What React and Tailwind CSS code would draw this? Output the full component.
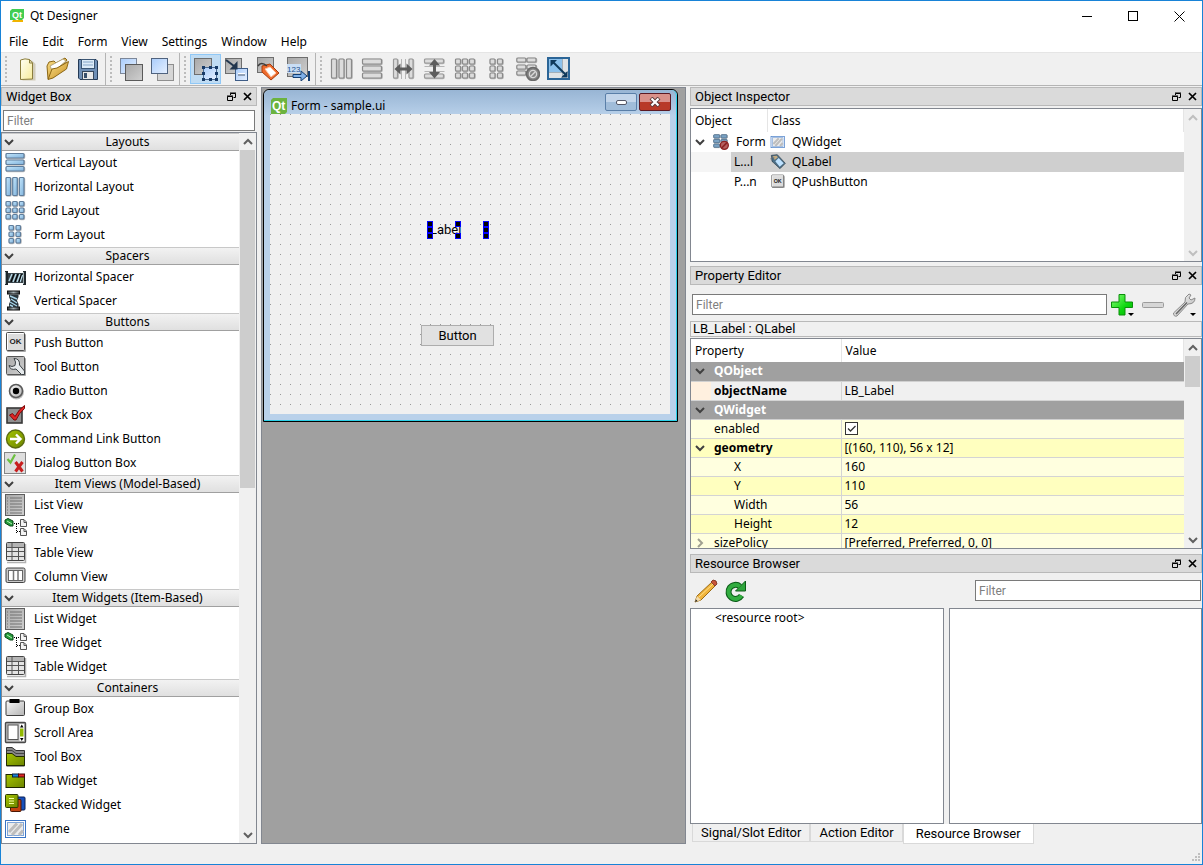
import { useState } from "react";
import clsx from "clsx";

/* ---------- shared gradients, referenced by every icon ---------- */

const GradientDefs = () => (
  <svg width="0" height="0" className="absolute" aria-hidden="true">
    <defs>
      <linearGradient id="blue" x1="0" y1="0" x2="1" y2="1">
        <stop offset="0" stopColor="#c4e6fb" />
        <stop offset="1" stopColor="#7fb2dc" />
      </linearGradient>
      <linearGradient id="pale" x1="0" y1="0" x2="1" y2="1">
        <stop offset="0" stopColor="#a9ccfa" />
        <stop offset="1" stopColor="#e6f0ff" />
      </linearGradient>
      <linearGradient id="grey" x1="0" y1="0" x2="1" y2="1">
        <stop offset="0" stopColor="#a8a8a8" />
        <stop offset="1" stopColor="#d0d0d0" />
      </linearGradient>
      <linearGradient id="light" x1="0" y1="0" x2="1" y2="1">
        <stop offset="0" stopColor="#f8f8f8" />
        <stop offset="1" stopColor="#b4b4b4" />
      </linearGradient>
      <linearGradient id="paper" x1="0" y1="0" x2="1" y2="1">
        <stop offset="0" stopColor="#fffff4" />
        <stop offset="1" stopColor="#f7eb9b" />
      </linearGradient>
      <linearGradient id="folder" x1="0" y1="0" x2="1" y2="1">
        <stop offset="0" stopColor="#fbe08a" />
        <stop offset="1" stopColor="#c68d1e" />
      </linearGradient>
      <linearGradient id="olive" x1="0" y1="0" x2="1" y2="1">
        <stop offset="0" stopColor="#a5c400" />
        <stop offset="1" stopColor="#6c8400" />
      </linearGradient>
      <linearGradient id="green" x1="0" y1="0" x2="1" y2="1">
        <stop offset="0" stopColor="#8dff7c" />
        <stop offset="0.6" stopColor="#10d810" />
        <stop offset="1" stopColor="#05b005" />
      </linearGradient>
      <linearGradient id="metal" x1="0" y1="0" x2="1" y2="0">
        <stop offset="0" stopColor="#2a3034" />
        <stop offset="0.5" stopColor="#a8b4b8" />
        <stop offset="1" stopColor="#2a3034" />
      </linearGradient>
    </defs>
  </svg>
);

const Svg = ({ size = 24, children }) => (
  <svg width={size} height={size} viewBox="0 0 24 24" className="shrink-0" fill="none" aria-hidden="true">
    {children}
  </svg>
);

const Cells = ({ xs, ys, w, h, fill, stroke }) =>
  xs.map((x) =>
    ys.map((y) => (
      <g key={`${x}-${y}`}>
        <rect x={x + 0.5} y={y + 0.5} width={w} height={h} rx="1" stroke="#000" strokeOpacity="0.25" strokeWidth="1.5" />
        <rect x={x} y={y} width={w} height={h} rx="1" fill={fill} stroke={stroke} strokeWidth="1.2" />
      </g>
    ))
  );

const NoSign = ({ color, fill }) => (
  <g>
    <circle cx="17" cy="17" r="6.5" fill={fill} stroke={color} strokeWidth="1.5" />
    <circle cx="17" cy="17" r="3.6" stroke="#d8d8d8" strokeWidth="1.3" />
    <path d="M14.5 19.5L19.5 14.5" stroke="#d8d8d8" strokeWidth="1.4" />
  </g>
);

/* ---------- toolbar icons ---------- */

const greyCells = { fill: "#dcdcdc", stroke: "#8a8a8a" };

const toolIcons = {
  newFile: (
    <g>
      <path d="M7.5 2.5H16L19.5 6V22.5H6.5V3.5Z" fill="#8a7a40" opacity="0.3" transform="translate(1 1)" />
      <path d="M5.5 3Q10 1 14.500 2.500L17.500 6V22L5.500 22.500Z" fill="url(#paper)" stroke="#8b7d3c" />
      <path d="M14.500 2.500V6H17.500" stroke="#8b7d3c" />
    </g>
  ),
  open: (
    <g>
      <path d="M1 9L3 5L8 4L10 6L19 1L21 3L8 20L2 22Z" fill="url(#folder)" stroke="#8c6716" />
      <path d="M4 9L17 2L20 4L7 15Z" fill="#fff" stroke="#b5a77c" />
      <path d="M2 22.5L6 12L11 11L22.5 4.5L20.5 12L7 21Z" fill="url(#folder)" stroke="#8c6716" />
    </g>
  ),
  save: (
    <g>
      <path d="M1.5 2.5H19L20.5 4V22.5H3L1.5 21Z" fill="#6f8fb6" stroke="#243a56" />
      <rect x="4.5" y="2.5" width="13" height="9" fill="#dcebf8" stroke="#3a5573" />
      <path d="M6 5H16M6 8H16" stroke="#86a6c8" />
      <rect x="5.5" y="14.5" width="11" height="8" fill="#e8e8e8" stroke="#37485c" />
      <rect x="7" y="16" width="3" height="5" fill="#39506c" />
    </g>
  ),
  sendBack: (
    <g>
      <rect x="0.5" y="1.5" width="16" height="15" fill="url(#pale)" stroke="#7c8799" />
      <rect x="5.5" y="7.5" width="17" height="16" fill="url(#grey)" stroke="#5a5a5a" />
    </g>
  ),
  raise: (
    <g>
      <rect x="6.5" y="7.5" width="16" height="16" fill="#d6d6d6" stroke="#8f8f8f" />
      <rect x="0.5" y="1.5" width="16" height="15" fill="url(#pale)" stroke="#50637f" />
    </g>
  ),
  widgets: (
    <g>
      <rect x="0.5" y="1.5" width="17" height="16" fill="url(#grey)" stroke="#6e6e6e" />
      <rect x="9.5" y="10.5" width="13" height="12" fill="url(#pale)" stroke="#4a688e" />
      {[8, 15, 21].map((x) =>
        [9, 15, 21].map((y) => x === 15 && y === 15 ? null : (
          <rect key={`${x}-${y}`} x={x} y={y} width="3" height="3" fill="#173a67" />
        ))
      )}
    </g>
  ),
  signals: (
    <g>
      <rect x="0.5" y="1.5" width="16" height="15" fill="url(#grey)" stroke="#6e6e6e" />
      <rect x="10.5" y="11.5" width="12" height="12" fill="url(#pale)" stroke="#3d5c86" />
      <path d="M13 17.5H20" stroke="#fff" strokeWidth="3" />
      <path d="M13 18H20" stroke="#23436f" />
      <path d="M1 3L9 9" stroke="#22364e" strokeWidth="2" />
      <path d="M12.500 12.500V4L4.500 12.500Z" fill="#22364e" />
    </g>
  ),
  buddies: (
    <g>
      <rect x="1.5" y="0.5" width="16" height="15" fill="url(#grey)" stroke="#6e6e6e" />
      <path d="M6 9L14 7L23 16L15 23L6 15Z" fill="#ee6b2d" stroke="#a73c0c" />
      <path d="M9 12L14 10L20 16L15 20Z" fill="#fff" stroke="#ffc7a6" />
      <path d="M2 9Q5 4 11 9" stroke="#3c3c3c" strokeWidth="1.5" />
    </g>
  ),
  tabOrder: (
    <g>
      <rect x="0.5" y="0.5" width="20" height="19" fill="url(#grey)" stroke="#6e6e6e" />
      <rect x="0" y="7" width="14" height="9" fill="#c9def5" />
      <text x="0" y="15" fontSize="8" fontFamily="Liberation Sans, sans-serif" fill="#1d4f8c">123</text>
      <path d="M6 17.500H14V14L20 19L14 24V20.500H6Z" fill="#7fb0e8" stroke="#153f72" />
      <path d="M22 14V24" stroke="#153f72" strokeWidth="2" />
    </g>
  ),
  horizontal: <Cells xs={[1.5, 9, 16.5]} ys={[2]} w={5} h={19} {...greyCells} />,
  vertical: <Cells xs={[1.5]} ys={[2, 9, 16]} w={19} h={5} {...greyCells} />,
  splitH: (
    <g>
      <Cells xs={[1.5, 17]} ys={[2]} w={4} h={19} fill="#dcdcdc" stroke="#9a9a9a" />
      <path d="M9.500 2V22M13.500 2V22" stroke="#b5b5b5" />
      <path d="M2.500 12L8.500 6.500V10.500H14.500V6.500L20.500 12L14.500 17.500V13.500H8.500V17.500Z" fill="#5d5d5d" />
    </g>
  ),
  splitV: (
    <g>
      <Cells xs={[1.5]} ys={[2, 17]} w={19} h={4} fill="#dcdcdc" stroke="#9a9a9a" />
      <path d="M1.500 9.500H21.500M1.500 14.500H21.500" stroke="#b5b5b5" />
      <path d="M11.500 2L17 8.500H13V15H17L11.500 21.500L6 15H10V8.500H6Z" fill="#5d5d5d" />
    </g>
  ),
  grid: <Cells xs={[1.5, 8.5, 15.5]} ys={[2, 9, 16]} w={5} h={5} {...greyCells} />,
  form: <Cells xs={[5, 12.5]} ys={[2, 9, 16]} w={5} h={5} {...greyCells} />,
  breakLayout: (
    <g>
      <Cells xs={[0.8, 11]} ys={[1, 8, 14]} w={9} h={4} {...greyCells} />
      <NoSign color="#6a6a6a" fill="#858585" />
    </g>
  ),
  adjust: (
    <g>
      <rect x="1" y="1" width="21" height="21" fill="#dfe3e6" stroke="#2b6597" strokeWidth="2" />
      <rect x="2" y="2" width="13" height="13" fill="#8cc1ec" />
      <path d="M2 15.5H21M15.5 2V21" stroke="#a3afb9" />
      <path d="M6 5L18 17" stroke="#103a5c" strokeWidth="2" />
      <path d="M3.500 3H10L3.500 9.500ZM20.500 20.500H14L20.500 14Z" fill="#103a5c" />
    </g>
  ),
};

/* ---------- widget box icons ---------- */

const blueCells = { fill: "url(#blue)", stroke: "#5f7d9c" };

const listIcon = (
  <g>
    <rect x="1.5" y="1.5" width="19" height="21" fill="url(#grey)" stroke="#5e5e5e" />
    <path d="M6 5H18M6 8H18M6 11H18M6 14H18M6 17H18M6 20H18" stroke="#707070" />
    <path d="M3 5H4M3 8H4M3 11H4M3 14H4M3 17H4M3 20H4" stroke="#707070" />
  </g>
);

const treeIcon = (
  <g>
    <path d="M1 3L4 1.5L9 4V9L6 9L1 6Z" fill="#249c3a" stroke="#0b4516" />
    <path d="M3 4L8 7" stroke="#b4f0b4" />
    <path d="M10 6.5H15M12.5 7V16M13 14.5H16" stroke="#000" strokeDasharray="1 1" />
    <path d="M16.5 2.5H20L22.5 5V9.5H16.5ZM16.500 11.500H20L22.500 14V18.500H16.500Z" fill="#f4f4f4" stroke="#555" />
    <path d="M20 3V5.5H22M20 12V14.500H22" stroke="#555" />
  </g>
);

const tableIcon = (
  <g>
    <path d="M3 21.500H21.500V3" stroke="#000" strokeOpacity="0.3" strokeWidth="1.500" />
    <rect x="2.5" y="1.5" width="18" height="18" rx="1" fill="#e4e4e4" stroke="#444" />
    <rect x="3" y="2" width="17" height="4" fill="#b4b4b4" />
    <path d="M3 6.5H20M3 10.5H20M3 15.5H20M8 2V19M14.500 6V19" stroke="#555" />
  </g>
);

const okIcon = (
  <g>
    <rect x="3" y="3" width="19" height="18" rx="1" fill="#000" opacity="0.35" />
    <rect x="2.5" y="1.5" width="18" height="18" rx="1" fill="#dcdcdc" stroke="#4b4b4b" />
    <path d="M3.5 18.5V2.5H19.5" stroke="#fff" />
    <text x="5.5" y="13" fontSize="8" fontWeight="700" fontFamily="Liberation Sans, sans-serif" fill="#222">OK</text>
  </g>
);

const frameIcon = (
  <g>
    <rect x="1.5" y="3.5" width="20" height="17" fill="#fff" stroke="#3a74c4" />
    <rect x="3.5" y="5.5" width="16" height="13" fill="#ececec" stroke="#7fa5d8" />
    <path d="M5 15L13 6.5M8 18L18 7M15 18L19 13.500" stroke="#bdbdbd" strokeWidth="3" />
  </g>
);

const widgetIcons = {
  vLayout: <Cells xs={[2]} ys={[2.5, 9, 15.5]} w={18} h={4.5} {...blueCells} />,
  hLayout: <Cells xs={[2, 8.7, 15.4]} ys={[2.5]} w={4.6} h={18} {...blueCells} />,
  grid: <Cells xs={[2, 8.7, 15.4]} ys={[2.5, 9, 15.5]} w={4.5} h={4.5} {...blueCells} />,
  form: <Cells xs={[5, 12]} ys={[2.5, 9, 15.5]} w={4.5} h={4.5} {...blueCells} />,
  hSpacer: (
    <g>
      <path d="M2.5 6V20M20.500 6V20" stroke="#20282c" strokeWidth="3" />
      <path d="M1.5 7V19M19.500 7V19" stroke="#9eacb0" />
      <rect x="4" y="8" width="15" height="10" fill="#354147" />
      <path d="M5 16L8 9M9 17L12 9M13 17L16 9M16 17L18.500 10" stroke="#b9dbe8" strokeWidth="1.4" />
      <path d="M7 17L10 9M11 17L14 9M15 17L17.500 9" stroke="#000" />
    </g>
  ),
  vSpacer: (
    <g>
      <rect x="3.5" y="2" width="12" height="3" fill="url(#metal)" stroke="#111" />
      <rect x="3.5" y="18" width="12" height="3" fill="url(#metal)" stroke="#111" />
      <path d="M5 5.500H14.500V8L13 11.500L14.500 15V18H5V15L6.500 11.500L5 8Z" fill="#2a353b" />
      <path d="M6 7L13 10M7 10L13 14M6 13L13 17M6 16L9 17.500" stroke="#a6d3e8" strokeWidth="1.4" />
    </g>
  ),
  pushButton: okIcon,
  toolButton: (
    <g>
      <rect x="3" y="3" width="19" height="18" rx="1" fill="#000" opacity="0.35" />
      <rect x="2.5" y="1.5" width="18" height="18" rx="1" fill="url(#grey)" stroke="#555" />
      <path d="M10 3.500Q16 3.500 15.500 10L20.500 16V19.500H17.500L12 14Q6 15.500 5 10.500L8 11.500L11 10.500L11.500 7Z" fill="#e6eaec" stroke="#3a4044" />
    </g>
  ),
  radio: (
    <g>
      <circle cx="12.5" cy="13" r="7.5" fill="#000" opacity="0.25" />
      <circle cx="12" cy="12" r="6.5" fill="url(#light)" stroke="#5a5a5a" strokeWidth="1.6" />
      <circle cx="12" cy="12" r="3.200" fill="#000" />
    </g>
  ),
  checkBox: (
    <g>
      <rect x="3" y="5" width="15" height="15" fill="#8f8f8f" stroke="#383838" strokeWidth="1.6" />
      <path d="M5.500 12L8.500 10.500L11 13.500Q15 6 20.500 2.500L20.500 5.500Q15 10 12 17L10 17Z" fill="#e02525" stroke="#7d0a0a" />
    </g>
  ),
  commandLink: (
    <g>
      <circle cx="11.5" cy="12" r="9" fill="url(#olive)" stroke="#5b6b10" strokeWidth="1.4" />
      <path d="M6 12H16M12 7.5L16.5 12L12 16.5" stroke="#fff" strokeWidth="2.4" />
    </g>
  ),
  dialogBox: (
    <g>
      <rect x="0.5" y="1.5" width="21" height="21" fill="#dedede" stroke="#858585" />
      <path d="M3.500 8L6.500 11.500L11 3.500" stroke="#6cc040" strokeWidth="2.2" />
      <path d="M11.500 11L18.500 20.500M18.500 11L11.500 20.500" stroke="#c81e1e" strokeWidth="3" />
    </g>
  ),
  list: listIcon,
  tree: treeIcon,
  table: tableIcon,
  column: (
    <g>
      <rect x="2" y="3" width="19" height="14.500" rx="1.500" fill="#c9c9c9" stroke="#444" />
      <rect x="4.500" y="5.500" width="14" height="10" fill="#fff" stroke="#666" />
      <path d="M9.500 6V15M14 6V15" stroke="#777" strokeWidth="1.500" />
    </g>
  ),
  groupBox: (
    <g>
      <rect x="2" y="4" width="18.500" height="14.500" rx="1" fill="url(#light)" stroke="#3d3d3d" />
      <rect x="5.5" y="2" width="10" height="4" fill="#000" />
    </g>
  ),
  scrollArea: (
    <g>
      <rect x="1.5" y="1.5" width="20" height="20" rx="1" fill="#bdbdbd" stroke="#4a4a4a" strokeWidth="1.4" />
      <rect x="4" y="4" width="10" height="14.500" fill="#fff" stroke="#555" />
      <rect x="15.500" y="3" width="4.500" height="17" fill="#fff" />
      <rect x="16" y="7.500" width="3.500" height="8" fill="#92b800" />
      <path d="M16 6.500L17.800 3.500L19.500 6.500ZM16 17L17.800 20L19.500 17Z" fill="#000" />
    </g>
  ),
  toolBox: (
    <g>
      <path d="M2.5 2.5H8L12 5.5H20.5V21H2.5Z" fill="#888" stroke="#333" />
      <path d="M3 5.500H8L12 8.500H20" stroke="#444" />
      <path d="M2.5 8.500H8L12 11.500H20.5V20.500H2.5Z" fill="url(#olive)" stroke="#232c00" />
    </g>
  ),
  tabWidget: (
    <g>
      <rect x="2" y="5.5" width="18.500" height="13" fill="url(#olive)" stroke="#1d2500" />
      <rect x="8.5" y="5" width="6" height="3" fill="#1a82d8" stroke="#062544" />
      <rect x="14.5" y="5" width="6" height="3" fill="#e02626" stroke="#4a0808" />
    </g>
  ),
  stacked: (
    <g>
      <rect x="10.5" y="4" width="10.500" height="13" rx="1" fill="#1750bc" stroke="#081e55" />
      <rect x="6.5" y="6.5" width="10.500" height="12" rx="1" fill="#c24310" stroke="#4c1703" />
      <rect x="1.5" y="1.5" width="12.500" height="13" rx="1" fill="url(#olive)" stroke="#2c3a00" />
      <path d="M5 5.5H10M5 8H10M5 10.5H10" stroke="#f4ffa0" />
    </g>
  ),
  frame: frameIcon,
  breakForm: (
    <g>
      <Cells xs={[1, 12]} ys={[1, 8, 15]} w={9} h={5} fill="#7ba3c4" stroke="#4b6b88" />
      <circle cx="17" cy="17" r="6" fill="#b56060" stroke="#8c2424" strokeWidth="2" />
      <path d="M13 21L21 13" stroke="#8c2424" strokeWidth="2.500" />
    </g>
  ),
  tag: (
    <g>
      <path d="M2 2L11 1L23 14L15 22L3 11Z" fill="#4c6e86" stroke="#2c3c48" />
      <path d="M8 11L13 6L20.500 14L14.500 19Z" fill="#bfe2ff" />
      <path d="M4 3L10 2.500L12 5L7 9Z" fill="#c2ab82" />
      <path d="M1 8Q2 2 7 6" stroke="#777" />
    </g>
  ),
};

const widgetGroups = [
  {
    title: "Layouts",
    items: [
      ["vLayout", "Vertical Layout"],
      ["hLayout", "Horizontal Layout"],
      ["grid", "Grid Layout"],
      ["form", "Form Layout"],
    ],
  },
  {
    title: "Spacers",
    items: [
      ["hSpacer", "Horizontal Spacer"],
      ["vSpacer", "Vertical Spacer"],
    ],
  },
  {
    title: "Buttons",
    items: [
      ["pushButton", "Push Button"],
      ["toolButton", "Tool Button"],
      ["radio", "Radio Button"],
      ["checkBox", "Check Box"],
      ["commandLink", "Command Link Button"],
      ["dialogBox", "Dialog Button Box"],
    ],
  },
  {
    title: "Item Views (Model-Based)",
    items: [
      ["list", "List View"],
      ["tree", "Tree View"],
      ["table", "Table View"],
      ["column", "Column View"],
    ],
  },
  {
    title: "Item Widgets (Item-Based)",
    items: [
      ["list", "List Widget"],
      ["tree", "Tree Widget"],
      ["table", "Table Widget"],
    ],
  },
  {
    title: "Containers",
    items: [
      ["groupBox", "Group Box"],
      ["scrollArea", "Scroll Area"],
      ["toolBox", "Tool Box"],
      ["tabWidget", "Tab Widget"],
      ["stacked", "Stacked Widget"],
      ["frame", "Frame"],
    ],
  },
];

const toolbars = [
  ["newFile", "open", "save"],
  ["sendBack", "raise"],
  ["widgets", "signals", "buddies", "tabOrder"],
  ["horizontal", "vertical", "splitH", "splitV", "grid", "form", "breakLayout", "adjust"],
];

const menus = ["File", "Edit", "Form", "View", "Settings", "Window", "Help"];

const properties = [
  { name: "QObject", group: true },
  { name: "objectName", value: "LB_Label", bold: true, plain: true },
  { name: "QWidget", group: true },
  { name: "enabled", check: true },
  { name: "geometry", value: "[(160, 110), 56 x 12]", bold: true, arrow: "down", dark: true },
  { name: "X", value: "160", child: true },
  { name: "Y", value: "110", child: true, dark: true },
  { name: "Width", value: "56", child: true },
  { name: "Height", value: "12", child: true, dark: true },
  { name: "sizePolicy", value: "[Preferred, Preferred, 0, 0]", arrow: "right" },
];

/* ---------- small parts ---------- */

const Chevron = ({ dir = "down", color = "#404040" }) => {
  const paths = {
    down: "M1 3L5 7L9 3",
    up: "M1 7L5 3L9 7",
    right: "M3 1L7 5L3 9",
  };
  return (
    <svg width="10" height="10" viewBox="0 0 10 10" fill="none" className="shrink-0" aria-hidden="true">
      <path d={paths[dir]} stroke={color} strokeWidth="2" />
    </svg>
  );
};

const ScrollBar = ({ disabled, thumb }) => (
  <div className="flex w-[17px] shrink-0 flex-col bg-[#f0f0f0] px-px">
    <button aria-label="Scroll up" className="flex h-[17px] items-center justify-center">
      <Chevron dir="up" color={disabled ? "#bfbfbf" : "#606060"} />
    </button>
    <div className="min-h-0 flex-1">{thumb && <div className={clsx("bg-[#cdcdcd]", thumb)} />}</div>
    <button aria-label="Scroll down" className="flex h-[17px] items-center justify-center">
      <Chevron color={disabled ? "#bfbfbf" : "#606060"} />
    </button>
  </div>
);

const DockTitle = ({ title }) => (
  <header className="flex h-[19px] shrink-0 items-center border border-[#b9b9b9] bg-[#dadada] pr-px pl-1 font-[Roboto,sans-serif] text-[13px] leading-4">
    <h2 className="flex-1">{title}</h2>
    <button aria-label={`Float ${title}`} className="flex w-4 items-center justify-center">
      <svg width="9" height="9" viewBox="0 0 9 9" fill="none">
        <path d="M3.5 3V1.5H8.5V5.5H6.5M3 1H9" stroke="#000" />
        <path d="M0.5 4.5H5.5V8.5H0.5ZM0 4H6" stroke="#000" />
      </svg>
    </button>
    <button aria-label={`Close ${title}`} className="flex w-4 items-center justify-center">
      <svg width="9" height="9" viewBox="0 0 9 9" fill="none">
        <path d="M1 1L8 8M8 1L1 8" stroke="#000" strokeWidth="1.7" />
      </svg>
    </button>
  </header>
);

const FilterInput = ({ label, className }) => (
  <input
    type="text"
    aria-label={label}
    placeholder="Filter"
    className={clsx(
      "h-[21px] border border-[#7a7a7a] bg-white px-[3px] font-[Roboto,sans-serif] text-xs leading-4 outline-none placeholder:text-[#808080]",
      className
    )}
  />
);

const TitleBar = () => (
  <header className="flex h-[30px] shrink-0 items-center bg-white pl-2">
    <svg width="16" height="14" viewBox="0 0 16 14" className="mr-[5px]" aria-hidden="true">
      <path d="M3 0H15V9L13 11H1V2Z" fill="#41cd52" />
      <path d="M4 11H14V13H3Z" fill="#f0b400" />
      <text x="3" y="8.5" fontSize="9" fontWeight="700" fontFamily="Liberation Sans, sans-serif" fill="#fff">Qt</text>
    </svg>
    <h1 className="flex-1">Qt Designer</h1>
    <button aria-label="Minimize" className="flex h-full w-[46px] items-center justify-center">
      <svg width="11" height="11" fill="none"><path d="M0 5.5H10" stroke="#000" /></svg>
    </button>
    <button aria-label="Maximize" className="flex h-full w-[46px] items-center justify-center">
      <svg width="11" height="11" fill="none"><rect x="0.5" y="0.5" width="9" height="9" stroke="#000" /></svg>
    </button>
    <button aria-label="Close" className="flex h-full w-[46px] items-center justify-center">
      <svg width="11" height="11" fill="none"><path d="M0.5 0.5L10.5 10.5M10.5 0.5L0.5 10.5" stroke="#000" /></svg>
    </button>
  </header>
);

const ToolBars = () => {
  const [mode, setMode] = useState("widgets");
  return (
    <div className="flex h-[34px] shrink-0 border-y border-t-[#e5e5e5] border-b-[#b4b4b4] bg-[#f0f0f0]">
      {toolbars.map((tools, i) => (
        <div key={i} role="toolbar" className={clsx("flex items-center pr-px", i < 3 && "border-r border-[#b4b4b4]")}>
          <svg width="10" height="28" aria-hidden="true">
            {[0, 1, 2, 3, 4, 5, 6].map((n) => (
              <rect key={n} x="4" y={1 + n * 4} width="2" height="2" fill="#bcbcbc" />
            ))}
          </svg>
          {tools.map((name) => (
            <button
              key={name}
              aria-label={name}
              onClick={() => i === 2 && setMode(name)}
              className={clsx(
                "flex h-[30px] w-[31px] items-center justify-center",
                mode === name && "border border-[#90c8f6] bg-[#c0dcf3]"
              )}
            >
              <Svg>{toolIcons[name]}</Svg>
            </button>
          ))}
        </div>
      ))}
    </div>
  );
};

const WidgetBox = () => (
  <aside className="flex w-64 shrink-0 flex-col">
    <DockTitle title="Widget Box" />
    <FilterInput label="Filter widgets" className="mx-0.5 mt-1 mb-px shrink-0" />
    <div className="flex min-h-0 flex-1 border border-[#828790] bg-white">
      <div className="min-w-0 flex-1 overflow-hidden">
        {widgetGroups.map(({ title, items }) => (
          <section key={title}>
            <button className="flex h-[18px] w-full items-center border-y border-[#a0a0a0] bg-linear-to-b from-[#f2f2f2] to-[#e0e0e0] px-0.5 leading-4 first-of-type:border-t-[#c8c8c8]">
              <Chevron />
              <span className="flex-1 pl-1">{title}</span>
            </button>
            <ul>
              {items.map(([icon, label]) => (
                <li key={label} className="flex h-6 items-center gap-1.5 pl-0.5">
                  <Svg>{widgetIcons[icon]}</Svg>
                  {label}
                </li>
              ))}
            </ul>
          </section>
        ))}
      </div>
      <ScrollBar thumb="h-1/2" />
    </div>
  </aside>
);

const Handle = ({ className }) => (
  <span className={clsx("absolute size-1.5 border border-[#0000ff] bg-black", className)} />
);

const FormWindow = () => (
  <div className="absolute top-px left-px flex flex-col rounded-t-md border border-black bg-[#b9d1ea]">
    <div className="flex flex-col rounded-t-md border-r border-b border-[#2ad0e8] bg-linear-to-b from-[#98b5d4] to-[#b9d1ea] to-[26px] px-[6px] pb-[6px]">
      <div className="flex h-6 items-center">
        <div className="flex flex-1 items-center gap-1 self-end pl-px">
          <svg width="16" height="16" viewBox="0 0 16 16" aria-hidden="true">
            <path d="M2 0H16V14L14 16H0V2Z" fill="#6cb33f" />
            <text x="1" y="12" fontSize="12" fontWeight="700" fontFamily="Liberation Sans, sans-serif" fill="#fff">Qt</text>
          </svg>
          Form - sample.ui
        </div>
        <div className="-mr-px flex gap-0.5">
          <button aria-label="Minimize form" className="flex h-[18px] w-8 items-center justify-center rounded-xs border border-[#5a7fa8] bg-linear-to-b from-[#c3d5ea] from-50% to-[#a0bcd9] to-50%">
            <span className="h-[5px] w-[11px] rounded-xs border border-[#535666] bg-white" />
          </button>
          <button aria-label="Close form" className="flex h-[18px] w-8 items-center justify-center rounded-xs border border-[#5b1a24] bg-linear-to-b from-[#d9918a] from-50% to-[#b83a28] to-50%">
            <svg width="12" height="10" viewBox="0 0 12 10" fill="none">
              <path d="M2 1L10 9M10 1L2 9" stroke="#5a3a3a" strokeWidth="4" />
              <path d="M2.5 1.5L9.5 8.5M9.5 1.5L2.5 8.5" stroke="#fff" strokeWidth="2.2" />
            </svg>
          </button>
        </div>
      </div>
      {/* design surface, widgets keep their own geometry */}
      <div className="relative h-[300px] w-[400px] bg-[#f0f0f0] bg-[radial-gradient(circle_at_0px_0px,#989898_1px,transparent_1px)] bg-[length:10px_10px] font-[Roboto,sans-serif] text-[13px]">
        <div className="absolute top-[110px] left-[160px] h-3 w-14 leading-3">
          Label
          <Handle className="-top-[3px] -left-[3px]" />
          <Handle className="top-[3px] -left-[3px]" />
          <Handle className="top-[9px] -left-[3px]" />
          <Handle className="-top-[3px] left-[25px]" />
          <Handle className="top-[9px] left-[25px]" />
          <Handle className="-top-[3px] left-[53px]" />
          <Handle className="top-[3px] left-[53px]" />
          <Handle className="top-[9px] left-[53px]" />
        </div>
        <button className="absolute top-[211px] left-[151px] h-[21px] w-[73px] border border-[#adadad] bg-[#e1e1e1] leading-4">
          Button
        </button>
      </div>
    </div>
  </div>
);

const ObjectInspector = () => (
  <section className="flex h-[175px] shrink-0 flex-col">
    <DockTitle title="Object Inspector" />
    <div className="mt-0.5 flex min-h-0 flex-1 border border-[#828790] bg-white">
      <div className="min-w-0 flex-1">
        <table className="w-full table-fixed border-collapse text-left">
          <colgroup>
            <col className="w-10" />
            <col className="w-9" />
            <col />
          </colgroup>
          <thead>
            <tr className="h-[23px]">
              <th colSpan={2} className="border-r border-[#e5e5e5] pl-1 font-normal">Object</th>
              <th className="border-r border-[#e5e5e5] pl-1 font-normal">Class</th>
            </tr>
          </thead>
          <tbody>
            <tr className="h-5">
              <td>
                <div className="flex items-center gap-2 pl-1">
                  <Chevron />
                  <Svg size={16}>{widgetIcons.breakForm}</Svg>
                </div>
              </td>
              <td className="pl-[5px] whitespace-nowrap">Form</td>
              <td className="pl-[3px]">
                <div className="flex items-center gap-1.5">
                  <Svg size={16}>{frameIcon}</Svg>
                  QWidget
                </div>
              </td>
            </tr>
            <tr className="h-5 bg-[#cfcfcf]">
              <td className="bg-[#f5f5f5]" />
              <td className="pl-[3px]">L...l</td>
              <td className="pl-[3px]">
                <div className="flex items-center gap-1.5">
                  <Svg size={16}>{widgetIcons.tag}</Svg>
                  QLabel
                </div>
              </td>
            </tr>
            <tr className="h-5">
              <td />
              <td className="pl-[3px]">P...n</td>
              <td className="pl-[3px]">
                <div className="flex items-center gap-1.5">
                  <Svg size={16}>{okIcon}</Svg>
                  QPushButton
                </div>
              </td>
            </tr>
          </tbody>
        </table>
      </div>
      <ScrollBar disabled />
    </div>
  </section>
);

const PropertyRow = ({ prop }) => {
  const [enabled, setEnabled] = useState(true);

  if (prop.group) {
    return (
      <tr className="h-[19px] border-b border-[#d0d0d0] bg-[#a0a0a0] font-bold text-white">
        <td colSpan={2}>
          <div className="flex h-[18px] items-center gap-[9px] pl-1">
            <Chevron />
            {prop.name}
          </div>
        </td>
      </tr>
    );
  }

  return (
    <tr
      className={clsx(
        "h-[19px] border-b border-[#d4d4d4]",
        prop.plain ? "bg-[#f0f0f0]" : prop.dark ? "bg-[#ffffbf]" : "bg-[#ffffdf]"
      )}
    >
      <td className="border-r border-[#d4d4d4]">
        <div className={clsx("flex h-[18px] items-center", prop.bold && "font-bold")}>
          <span className={clsx("mr-[3px] flex h-full w-5 items-center pl-1", prop.plain && "bg-[#fff0df]")}>
            {prop.arrow && <Chevron dir={prop.arrow} color={prop.arrow === "right" ? "#a0a090" : "#404040"} />}
          </span>
          <span className={clsx(prop.child && "pl-5")}>{prop.name}</span>
        </div>
      </td>
      <td className="pl-[3px]">
        {prop.check ? (
          <span className="grid w-[13px]">
            <input
              type="checkbox"
              aria-label={prop.name}
              checked={enabled}
              onChange={() => setEnabled(!enabled)}
              className="col-start-1 row-start-1 size-[13px] appearance-none border border-[#333] bg-white"
            />
            {enabled && (
              <svg width="13" height="13" fill="none" className="pointer-events-none col-start-1 row-start-1">
                <path d="M3 6.5L5.5 9L10.5 4" stroke="#333" strokeWidth="1.3" />
              </svg>
            )}
          </span>
        ) : (
          prop.value
        )}
      </td>
    </tr>
  );
};

const DropMark = () => (
  <svg width="6" height="4" className="absolute right-0 bottom-0" aria-hidden="true">
    <path d="M0 0H6L3 3Z" fill="#000" />
  </svg>
);

const PropertyEditor = () => (
  <section className="mt-1 flex h-[283px] shrink-0 flex-col">
    <DockTitle title="Property Editor" />
    <div className="flex h-[35px] shrink-0 items-center gap-[7px] pr-1.5 pl-0.5">
      <FilterInput label="Filter properties" className="-mr-1 mt-1 min-w-0 flex-1" />
      <button aria-label="Add property" className="relative mt-1">
        <Svg>
          <path d="M9 1.5H15V9H22.5V14.5H15V22H9V14.5H1.5V9H9Z" fill="url(#green)" stroke="#0b8f0b" />
        </Svg>
        <DropMark />
      </button>
      <button aria-label="Remove property" className="mt-1">
        <Svg>
          <rect x="1.5" y="9.5" width="21" height="5" rx="1" fill="#d6d6d6" stroke="#9c9c9c" />
        </Svg>
      </button>
      <button aria-label="Configure" className="relative mt-1">
        <Svg>
          <path d="M1.5 20L13 9Q12 4 17 1L19 2L17 5L19 7L23 5Q23 11 16 11L5 23Q1.500 24 1.500 20Z" fill="url(#light)" stroke="#8a8a8a" />
          <path d="M4 21L15 9.500" stroke="#666" strokeWidth="1.500" />
        </Svg>
        <DropMark />
      </button>
    </div>
    <p className="mt-px h-4 shrink-0 border border-[#b9b9b9] pl-0.5 font-[Roboto,sans-serif] text-[13px] leading-[14px]">
      LB_Label : QLabel
    </p>
    <div className="mt-px flex min-h-0 flex-1 border border-[#828790] bg-white">
      <div className="min-w-0 flex-1 overflow-hidden">
        <table className="w-full table-fixed border-collapse text-left leading-4">
          <colgroup>
            <col className="w-[150px]" />
            <col />
          </colgroup>
          <thead>
            <tr className="h-[23px]">
              <th className="border-r border-[#e5e5e5] pl-1 font-normal">Property</th>
              <th className="border-r border-[#e5e5e5] pl-1 font-normal">Value</th>
            </tr>
          </thead>
          <tbody>
            {properties.map((prop) => (
              <PropertyRow key={prop.name} prop={prop} />
            ))}
          </tbody>
        </table>
      </div>
      <ScrollBar thumb="h-[31px]" />
    </div>
  </section>
);

const ResourceBrowser = () => {
  const [tab, setTab] = useState("Resource Browser");
  return (
    <section className="mt-[5px] flex min-h-0 flex-1 flex-col">
      <DockTitle title="Resource Browser" />
      <div className="flex h-[35px] shrink-0 items-center gap-1.5 pr-px pl-1">
        <button aria-label="Edit resources">
          <Svg>
            <path d="M1 23L3 17L18 3L22 6L7 21Z" fill="#f0b43c" stroke="#9b6a14" />
            <path d="M17 3L19 1Q23 1 23 5L21 7Z" fill="#c8553a" stroke="#87402c" />
            <path d="M1 23L3 17L7 21Z" fill="#f3dcae" />
            <path d="M1 23L2 20.5L3.5 22Z" fill="#222" />
            <path d="M5 18L19 5" stroke="#ffe08c" />
          </Svg>
        </button>
        <button aria-label="Reload">
          <Svg>
            <path d="M17.500 16.500A7 7 0 1 1 16 7.500" stroke="#0c5c18" strokeWidth="6" />
            <path d="M21.500 2V12H11.500Z" fill="#2fa63c" stroke="#0c5c18" />
            <path d="M17.500 16.500A7 7 0 1 1 16 7.500" stroke="#32ad40" strokeWidth="4" />
          </Svg>
        </button>
        <FilterInput label="Filter resources" className="ml-auto w-[226px]" />
      </div>
      <div className="flex min-h-0 flex-1 gap-[5px]">
        <ul className="w-[254px] border border-[#828790] bg-white pl-6 leading-[18px]">
          <li>&lt;resource root&gt;</li>
        </ul>
        <div className="flex-1 border border-[#828790] bg-white" />
      </div>
      <div role="tablist" className="flex h-5 shrink-0 items-start pl-0.5 font-[Roboto,sans-serif] text-[13px] leading-4">
        {["Signal/Slot Editor", "Action Editor", "Resource Browser"].map((name) => (
          <button
            key={name}
            role="tab"
            aria-selected={tab === name}
            onClick={() => setTab(name)}
            className={clsx(
              "border border-t-0 border-[#d9d9d9]",
              tab === name ? "h-5 bg-white px-3" : "h-[18px] bg-[#f0f0f0] px-2"
            )}
          >
            {name}
          </button>
        ))}
      </div>
    </section>
  );
};

const App = () => (
  <div className="flex h-screen flex-col overflow-hidden border border-[#1883d7] bg-[#f0f0f0] font-['Noto_Sans','Open_Sans',sans-serif] text-xs leading-4 text-black">
    <GradientDefs />
    <TitleBar />
    <nav className="flex h-[21px] shrink-0 items-center bg-white pl-px">
      {menus.map((name) => (
        <button key={name} className="px-[7px]">{name}</button>
      ))}
    </nav>
    <ToolBars />
    <main className="flex min-h-0 flex-1 gap-1 pt-px">
      <WidgetBox />
      <div className="relative min-w-0 flex-1 overflow-hidden border border-[#828790] bg-[#a0a0a0]">
        <FormWindow />
      </div>
      <div className="flex w-[512px] shrink-0 flex-col">
        <ObjectInspector />
        <PropertyEditor />
        <ResourceBrowser />
      </div>
    </main>
    <footer className="flex h-5 shrink-0 items-end justify-end p-0.5">
      <svg width="9" height="9" fill="#bfbfbf" aria-hidden="true">
        <path d="M7 0H9V2H7ZM4 3H6V5H4ZM7 3H9V5H7ZM1 6H3V8H1ZM4 6H6V8H4ZM7 6H9V8H7Z" />
      </svg>
    </footer>
  </div>
);

export default App;
